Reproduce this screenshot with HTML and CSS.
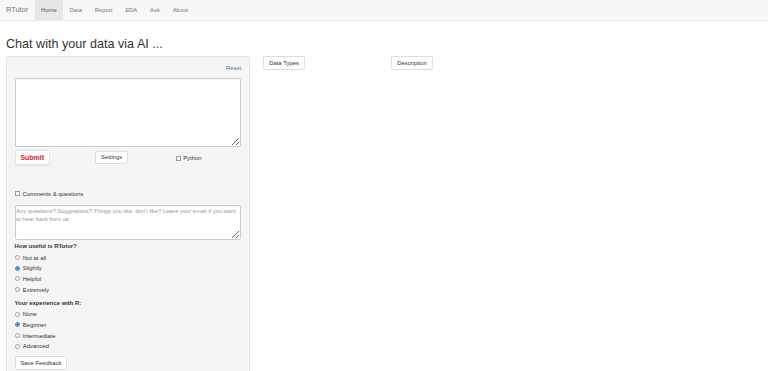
FILE: index.html
```html
<!DOCTYPE html>
<html lang="en">
<head>
<meta charset="utf-8">
<title>RTutor</title>
<link rel="stylesheet" href="styles.css">
</head>
<body>
<nav class="navbar">
  <a class="brand" href="#">RTutor</a>
  <ul class="nav">
    <li class="active"><a href="#">Home</a></li>
    <li><a href="#">Data</a></li>
    <li><a href="#">Report</a></li>
    <li><a href="#">EDA</a></li>
    <li><a href="#">Ask</a></li>
    <li><a href="#">About</a></li>
  </ul>
</nav>
<div class="page">
  <h2 class="title">Chat with your data via AI ...</h2>
  <div class="layout">
    <aside class="well">
      <div class="reset-row"><a href="#" class="reset">Reset</a></div>
      <textarea class="chat-input"></textarea>
      <div class="action-row">
        <div><button class="btn btn-submit">Submit</button></div>
        <div><button class="btn">Settings</button></div>
        <label class="check"><input type="checkbox"><span>Python</span></label>
      </div>
      <label class="check comments"><input type="checkbox"><span>Comments &amp; questions</span></label>
      <textarea class="feedback-input" placeholder="Any questions? Suggestions? Things you like, don't like? Leave your email if you want to hear back from us."></textarea>
      <div class="q-label">How useful is RTutor?</div>
      <div class="radio-group">
        <label class="radio"><input type="radio" name="useful"><span>Not at all</span></label>
        <label class="radio"><input type="radio" name="useful" checked><span>Slightly</span></label>
        <label class="radio"><input type="radio" name="useful"><span>Helpful</span></label>
        <label class="radio"><input type="radio" name="useful"><span>Extremely</span></label>
      </div>
      <div class="q-label q-second">Your experience with R:</div>
      <div class="radio-group">
        <label class="radio"><input type="radio" name="exp"><span>None</span></label>
        <label class="radio"><input type="radio" name="exp" checked><span>Beginner</span></label>
        <label class="radio"><input type="radio" name="exp"><span>Intermediate</span></label>
        <label class="radio"><input type="radio" name="exp"><span>Advanced</span></label>
      </div>
      <div class="save-row"><button class="btn">Save Feedback</button></div>
    </aside>
    <main class="main">
      <div class="main-buttons">
        <div><button class="btn btn-main">Data Types</button></div>
        <div><button class="btn btn-main">Description</button></div>
      </div>
    </main>
  </div>
</div>
</body>
</html>
```

FILE: styles.css
```css
* { box-sizing: border-box; }
html, body { margin: 0; padding: 0; }
body {
  font-family: "Liberation Sans", Arial, Helvetica, sans-serif;
  font-size: 5.9px;
  line-height: 8px;
  color: #333;
  background: #fff;
}

/* navbar */
.navbar {
  display: flex;
  align-items: stretch;
  height: 21px;
  background: #f8f8f8;
  border-bottom: 1px solid #e7e7e7;
  padding-left: 6px;
}
.brand {
  display: flex;
  align-items: center;
  font-size: 7.4px;
  color: #777;
  text-decoration: none;
  padding-right: 6.4px;
}
.nav {
  display: flex;
  list-style: none;
  margin: 0;
  padding: 0;
}
.nav li { display: flex; }
.nav a {
  display: flex;
  align-items: center;
  padding: 0 6.4px;
  color: #777;
  text-decoration: none;
}
.nav .active a {
  background: #e7e7e7;
  color: #555;
}

/* page */
.page { padding: 0 6px; }
.title {
  margin: 17.2px 0 4px;
  font-size: 12.6px;
  line-height: 13.4px;
  font-weight: normal;
  color: #333;
}
.layout {
  display: grid;
  grid-template-columns: 244px 1fr;
  column-gap: 12px;
  align-items: start;
}

/* sidebar well */
.well {
  background: #f5f5f5;
  border: 1px solid #e3e3e3;
  border-radius: 1.6px;
  padding: 7.6px;
  box-shadow: inset 0 0.4px 0.4px rgba(0,0,0,.05);
}
.reset-row { text-align: right; height: 8px; }
.reset { color: #337ab7; text-decoration: none; }

textarea {
  display: block;
  width: 100%;
  margin: 0;
  background: #fff;
  border: 1px solid #ccc;
  border-radius: 1.6px;
  font-family: inherit;
  font-size: 5.9px;
  line-height: 8px;
  color: #555;
  resize: vertical;
  box-shadow: inset 0 0.4px 0.4px rgba(0,0,0,.075);
}
textarea::placeholder { color: #999; }
.chat-input { height: 69.5px; margin-top: 5.4px; padding: 2.4px 4.8px; }
.feedback-input {
  height: 35.5px;
  margin-top: 7px;
  padding: 1px 0 1px 0.6px;
  font-size: 5.78px;
}

.btn {
  display: inline-flex;
  align-items: center;
  height: 13.6px;
  padding: 0 4.8px;
  margin: 0;
  font-family: inherit;
  font-size: 5.9px;
  color: #333;
  background: #fff;
  border: 1px solid #ddd;
  border-radius: 1.6px;
  cursor: pointer;
}
.btn-main {
  height: 14.4px;
  padding: 0 5.6px;
  margin-left: 0.6px;
}
.btn-submit {
  height: 15.6px;
  font-size: 7px;
  font-weight: bold;
  color: #d7222c;
  border-color: #e6e6e6;
  box-shadow: 0 0.4px 1px rgba(0,0,0,.08);
}

.action-row {
  display: grid;
  grid-template-columns: 80.6px 80px auto;
  align-items: center;
  margin-top: 2.6px;
}

.check, .radio {
  display: flex;
  align-items: center;
  height: 8px;
  cursor: pointer;
}
.check input, .radio input {
  appearance: none;
  -webkit-appearance: none;
  margin: 0;
  flex: none;
}
.check input {
  width: 5px;
  height: 5px;
  border: 1px solid #9a9a9a;
  border-radius: 0.5px;
  background: #fff;
  margin-left: 0.4px;
  margin-right: 2.6px;
}
.action-row .check { margin-top: 1.4px; }
.comments { margin-top: 24.5px; }

.q-label {
  margin-top: 2px;
  font-weight: bold;
  height: 8px;
}
.q-second { margin-top: 5.2px; }
.radio-group {
  display: flex;
  flex-direction: column;
  gap: 2.67px;
  margin-top: 3.4px;
}
.radio input {
  width: 5px;
  height: 5px;
  border: 1px solid #a0a0a0;
  border-radius: 50%;
  background: #fff;
  margin-left: 0.8px;
  margin-right: 2.4px;
}
.radio input:checked {
  border-color: #2a7de1;
  background: radial-gradient(circle, #2a7de1 0 1.3px, #ffffff 1.4px);
}
.save-row { margin-top: 6px; }

/* main panel */
.main-buttons {
  display: grid;
  grid-template-columns: 128px 128px;
}
```
